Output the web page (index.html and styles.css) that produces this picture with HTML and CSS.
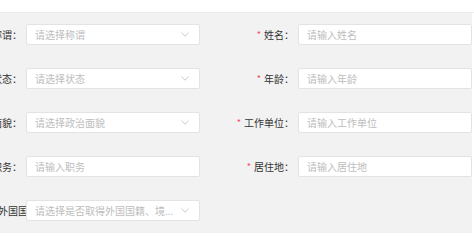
FILE: index.html
```html
<!DOCTYPE html>
<html lang="zh">
<head>
<meta charset="utf-8">
<link rel="stylesheet" href="styles.css">
</head>
<body>
<div class="topbar"></div>
<div class="panel">
  <div class="form">
    <div class="label">称谓：</div>
    <div class="field select"><span class="ph">请选择称谓</span><svg class="arrow" viewBox="0 0 8 5" width="8" height="5"><path d="M0.5 0.5 L4 4.2 L7.5 0.5" fill="none" stroke="#c4c4c4" stroke-width="0.9"/></svg></div>
    <div class="label"><span class="req">*</span>姓名：</div>
    <div class="field"><span class="ph">请输入姓名</span></div>

    <div class="label">人员状态：</div>
    <div class="field select"><span class="ph">请选择状态</span><svg class="arrow" viewBox="0 0 8 5" width="8" height="5"><path d="M0.5 0.5 L4 4.2 L7.5 0.5" fill="none" stroke="#c4c4c4" stroke-width="0.9"/></svg></div>
    <div class="label"><span class="req">*</span>年龄：</div>
    <div class="field"><span class="ph">请输入年龄</span></div>

    <div class="label">政治面貌：</div>
    <div class="field select"><span class="ph">请选择政治面貌</span><svg class="arrow" viewBox="0 0 8 5" width="8" height="5"><path d="M0.5 0.5 L4 4.2 L7.5 0.5" fill="none" stroke="#c4c4c4" stroke-width="0.9"/></svg></div>
    <div class="label"><span class="req">*</span>工作单位：</div>
    <div class="field"><span class="ph">请输入工作单位</span></div>

    <div class="label">职务：</div>
    <div class="field"><span class="ph">请输入职务</span></div>
    <div class="label"><span class="req">*</span>居住地：</div>
    <div class="field"><span class="ph">请输入居住地</span></div>

    <div class="label long">是否取得外国国籍、境外永久居留权：</div>
    <div class="field select"><span class="ph">请选择是否取得外国国籍、境...</span><svg class="arrow" viewBox="0 0 8 5" width="8" height="5"><path d="M0.5 0.5 L4 4.2 L7.5 0.5" fill="none" stroke="#c4c4c4" stroke-width="0.9"/></svg></div>
  </div>
</div>
<div class="bottombar"></div>
</body>
</html>
```
FILE: styles.css
```css
html, body {
  margin: 0;
  padding: 0;
  background: #ffffff;
  overflow: hidden;
}
body {
  font-family: "Noto Sans CJK SC", "Noto Sans", sans-serif;
  font-size: 10px;
  color: #333333;
  width: 474px;
  height: 238px;
}
.topbar {
  height: 13px;
  background: #ffffff;
  border-bottom: 1px solid #ececec;
  box-sizing: border-box;
}
.panel {
  background: #f2f2f2;
  height: 220px;
  box-sizing: border-box;
  padding-top: 11px;
  margin-right: 2px;
  overflow: hidden;
}
.form {
  display: grid;
  grid-template-columns: 90px 174px 98px 174px;
  grid-auto-rows: 21px;
  row-gap: 23px;
  margin-left: -64px;
}
.label {
  display: flex;
  align-items: center;
  justify-content: flex-end;
  padding-right: 4px;
  white-space: nowrap;
  color: #333333;
  font-size: 10px;
}
.label.long {
  justify-content: flex-start;
  overflow: hidden;
  padding-left: 22px;
  padding-right: 0;
}
.req {
  color: #f04864;
  margin-right: 3px;
  font-size: 9px;
}
.field {
  background: #ffffff;
  border: 1px solid #e3e3e3;
  border-radius: 2px;
  box-sizing: border-box;
  display: flex;
  align-items: center;
  padding: 0 9px 0 8px;
}
.ph {
  color: #bdbdbd;
  font-size: 10px;
  white-space: nowrap;
  flex: 1;
  overflow: hidden;
}
.arrow {
  flex: none;
  margin-right: 1px;
}
.bottombar {
  height: 5px;
  background: #ffffff;
}
```
